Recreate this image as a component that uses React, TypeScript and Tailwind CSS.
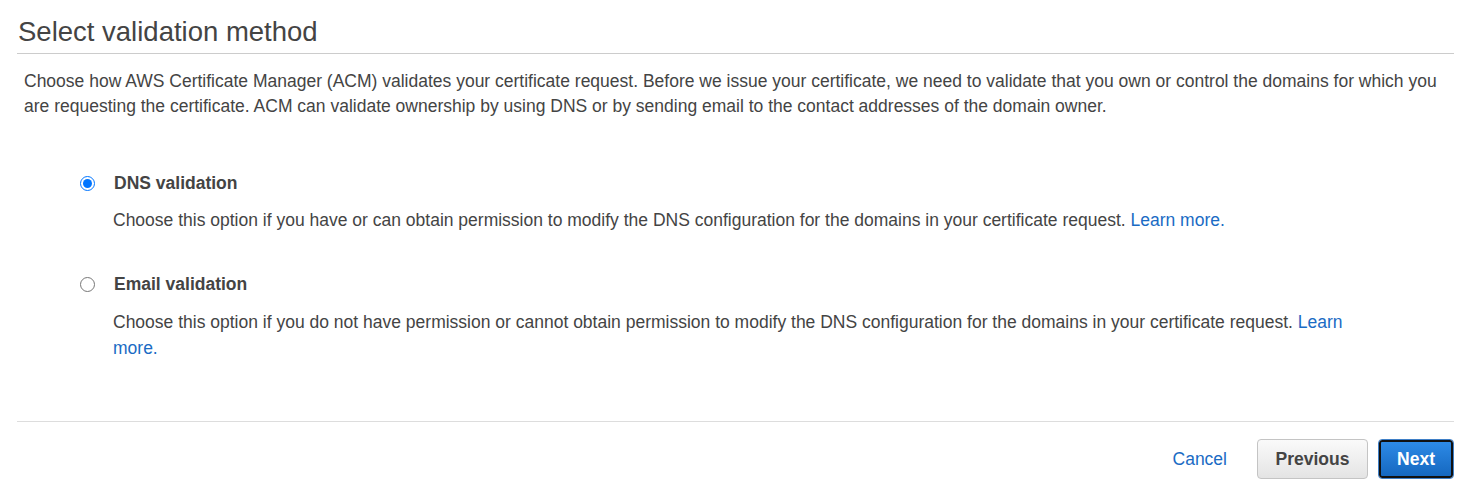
export default function App() {
  return (
    <div className="bg-white w-[1474px] h-[496px] pl-[17px] pr-[20px] pt-[14px] text-[#444] font-['Liberation_Sans',Arial,sans-serif]">
      <h1 className="text-[27.5px] leading-[36px] pl-[1px] pb-[3px] border-b border-[#ccc] font-normal">
        Select validation method
      </h1>
      <p className="text-[17.5px] leading-[25px] pl-[7px] pt-[15px]">
        Choose how AWS Certificate Manager (ACM) validates your certificate request. Before we issue your certificate, we need to validate that you own or control the domains for which you are requesting the certificate. ACM can validate ownership by using DNS or by sending email to the contact addresses of the domain owner.
      </p>

      <div className="pl-[63px] pt-[53px] pb-[60px] border-b border-[#ddd]">
        <label className="flex items-start gap-[19px]">
          <input type="radio" name="method" defaultChecked className="mt-[4px] w-[15px] h-[15px] accent-[#0075ff]" />
          <div>
            <div className="text-[17.5px] font-bold leading-[22px]">DNS validation</div>
            <div className="text-[17.5px] leading-[26px] mt-[13px] w-[1240px] -ml-[1px]">
              Choose this option if you have or can obtain permission to modify the DNS configuration for the domains in your certificate request.{' '}
              <a className="text-[#1a6bc4]">Learn more.</a>
            </div>
          </div>
        </label>
        <label className="flex items-start gap-[19px] mt-[40px]">
          <input type="radio" name="method" className="mt-[4px] w-[15px] h-[15px]" />
          <div>
            <div className="text-[17.5px] font-bold leading-[22px]">Email validation</div>
            <div className="text-[17.5px] leading-[26px] mt-[14px] w-[1240px] -ml-[1px]">
              Choose this option if you do not have permission or cannot obtain permission to modify the DNS configuration for the domains in your certificate request.{' '}
              <a className="text-[#1a6bc4]">Learn more.</a>
            </div>
          </div>
        </label>
      </div>

      <div className="flex justify-end items-center pt-[17px]">
        <a className="text-[17.5px] text-[#1a6bc4] mr-[30px]">Cancel</a>
        <button className="h-[40px] w-[111px] rounded-[4px] border border-[#c4c4c4] bg-gradient-to-b from-[#fafafa] to-[#e4e4e4] text-[17.5px] font-bold text-[#444]">
          Previous
        </button>
        <button className="ml-[11px] mr-[1px] h-[38px] w-[74px] rounded-[3px] border-[2px] border-[#111] outline outline-1 outline-[#3f7fc6] bg-gradient-to-b from-[#2d8ae6] to-[#1568c0] text-[17.5px] font-bold text-white">
          Next
        </button>
      </div>
    </div>
  );
}
